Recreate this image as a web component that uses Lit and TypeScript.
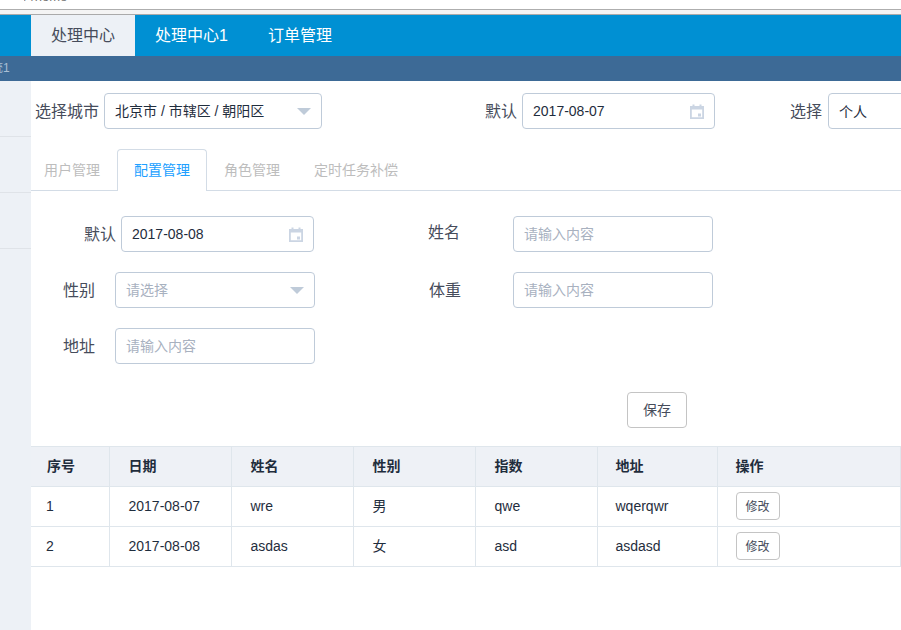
import { LitElement, html, css } from "lit";
import { customElement } from "lit/decorators.js";

const calendar = html`<svg class="cal" viewBox="0 0 14 15" width="14" height="15"><path fill="#cbd5e3" fill-rule="evenodd" d="M0 2h2.5V0.5h2V2h5V0.5h2V2H14v13H0zM1.8 5.5v7.7h10.4V5.5zM8 9.5h3v3H8z"/></svg>`;
const caret = html`<span class="caret"></span>`;

const rows = [
  ["1", "2017-08-07", "wre", "男", "qwe", "wqerqwr"],
  ["2", "2017-08-08", "asdas", "女", "asd", "asdasd"],
];

@customElement("app-root")
export class AppRoot extends LitElement {
  static styles = css`
    :host {
      display: block;
      width: 901px;
      height: 630px;
      overflow: hidden;
      background: #fff;
      color: #464c5b;
      font-family: "Liberation Sans", "Noto Sans CJK SC", sans-serif;
      font-size: 14px;
    }
    * { box-sizing: border-box; }
    .chrome { height: 15px; background: #fff; color: #777; font-size: 13px; line-height: 1; padding-left: 24px; overflow: hidden; }
    .chrome span { display: block; height: 4px; overflow: hidden; }
    .chrome span b { display: block; font-weight: 400; margin-top: -10px; }
    .chrome i { display: block; height: 1px; background: #aeaeae; margin: 5px 0 0 -24px; }
    .chrome u { display: block; height: 4px; background: #f4f4f4; margin-left: -24px; }
    .chrome em { display: block; height: 1px; background: #aaa; margin-left: -24px; }
    .nav { height: 41px; background: #0090d3; display: flex; padding-left: 31px; }
    .nav a { padding: 0 20px; color: #fff; font-size: 16px; line-height: 41px; white-space: nowrap; }
    .nav a.active { width: 104px; background: #edf1f6; color: #464c5b; }
    .sub { height: 25px; background: #3d6a96; color: #a9bfd4; font-size: 12px; line-height: 25px; overflow: hidden; }
    .sub span { display: inline-block; margin-left: -21px; }
    .body { display: flex; height: 549px; }
    .side { width: 31px; flex: none; background: #edf1f6; }
    .side div { height: 56px; border-bottom: 1px solid #dfe3e8; }
    .main { flex: 1; min-width: 0; overflow: hidden; }
    .top { display: flex; height: 68px; padding-top: 12px; }
    .lab { color: #464c5b; font-size: 16px; white-space: nowrap; padding-bottom: 3px; }
    .lab.up { padding-bottom: 6px; }
    .field {
      height: 36px;
      border: 1px solid #bfcbd9;
      border-radius: 4px;
      background: #fff;
      display: flex;
      align-items: center;
      justify-content: space-between;
      padding: 0 10px;
      color: #1f2d3d;
      font-size: 14px;
      white-space: nowrap;
      flex: none;
    }
    .zh { padding-bottom: 3px; }
    .ph { color: #a8b1bf; font-size: 14px; padding-bottom: 2px; }
    .caret { width: 0; height: 0; border: 7px solid transparent; border-top: 7px solid #bfcbd9; border-bottom: 0; }
    .cal { display: block; }
    .group { display: flex; align-items: center; height: 36px; }
    .tabs { display: flex; height: 42px; border-bottom: 1px solid #d3dce6; font-size: 14px; }
    .tab { padding: 0 17px 0 13px; width: 86px; line-height: 42px; color: #bdbdbd; white-space: nowrap; }
    .tab.on { width: 90px; padding: 0 16px; color: #20a0ff; background: #fff; border: 1px solid #d3dce6; border-bottom: 0; border-radius: 4px 4px 0 0; height: 42px; line-height: 41px; }
    .tab.mid { width: 90px; padding-left: 17px; }
    .tab.wide { width: auto; padding-left: 17px; }
    .form { height: 255px; }
    .form-body { display: grid; grid-template-columns: 397px 1fr; grid-template-rows: 36px 36px 36px; row-gap: 20px; padding-top: 25px; }
    .cell { display: flex; align-items: center; }
    .savebar { display: flex; padding: 28px 0 0 596px; }
    button { font: inherit; background: #fff; color: #464c5b; border: 1px solid #c4c4c4; border-radius: 4px; padding: 0 0 2px; }
    .save { width: 60px; height: 36px; font-size: 14px; }
    .mini { width: 44px; height: 28px; font-size: 12px; display: block; margin-left: -1px; padding: 0; }
    table { border-collapse: collapse; table-layout: fixed; width: 870px; font-size: 14px; }
    th, td { border: 1px solid #dfe6ec; border-left: 0; text-align: left; padding: 0 0 2px 19px; height: 40px; white-space: nowrap; color: #1f2d3d; }
    th { background: #eef1f6; font-weight: 700; font-size: 14px; padding-bottom: 3px; }
    td { font-size: 14px; }
    td.zc { padding-bottom: 4px; }
    th:first-child, td:first-child { padding-left: 15px; }
    th:first-child { padding-left: 16px; }
    th:nth-child(6), td:nth-child(6) { padding-left: 18px; }
    th:last-child { padding-left: 18px; }
    .c-l { width: 78px; }
    .c-m { width: 122px; }
    .c-n { width: 120px; }
  `;

  render() {
    return html`
      <div class="chrome"><span><b>/ /home</b></span><i></i><u></u><em></em></div>
      <div class="nav">
        <a class="active">处理中心</a><a>处理中心1</a><a>订单管理</a>
      </div>
      <div class="sub"><span>系统1</span></div>
      <div class="body">
        <div class="side"><div></div><div></div><div></div></div>
        <div class="main">
          <div class="top">
            <div class="group" style="margin-left:4px">
              <span class="lab">选择城市</span>
              <div class="field" style="width:218px;margin-left:5px"><span class="zh">北京市 / 市辖区 / 朝阳区</span>${caret}</div>
            </div>
            <div class="group" style="margin-left:163px">
              <span class="lab">默认</span>
              <div class="field" style="width:193px;margin-left:5px">2017-08-07${calendar}</div>
            </div>
            <div class="group" style="margin-left:75px">
              <span class="lab">选择</span>
              <div class="field" style="width:120px;margin-left:6px">个人</div>
            </div>
          </div>
          <div class="tabs">
            <div class="tab">用户管理</div>
            <div class="tab on">配置管理</div>
            <div class="tab mid">角色管理</div>
            <div class="tab wide">定时任务补偿</div>
          </div>
          <div class="form">
            <div class="form-body">
              <div class="cell">
                <span class="lab" style="margin-left:53px">默认</span>
                <div class="field" style="width:193px;margin-left:5px">2017-08-08${calendar}</div>
              </div>
              <div class="cell">
                <span class="lab up">姓名</span>
                <div class="field" style="width:200px;margin-left:53px"><span class="ph">请输入内容</span></div>
              </div>
              <div class="cell">
                <span class="lab" style="margin-left:32px">性别</span>
                <div class="field" style="width:200px;margin-left:20px"><span class="ph">请选择</span>${caret}</div>
              </div>
              <div class="cell">
                <span class="lab" style="margin-left:1px">体重</span>
                <div class="field" style="width:200px;margin-left:52px"><span class="ph">请输入内容</span></div>
              </div>
              <div class="cell">
                <span class="lab" style="margin-left:32px">地址</span>
                <div class="field" style="width:200px;margin-left:20px"><span class="ph">请输入内容</span></div>
              </div>
            </div>
            <div class="savebar"><button class="save">保存</button></div>
          </div>
          <table>
            <colgroup>
              <col class="c-l" /><col class="c-m" /><col class="c-m" /><col class="c-m" /><col class="c-m" /><col class="c-n" /><col />
            </colgroup>
            <thead>
              <tr><th>序号</th><th>日期</th><th>姓名</th><th>性别</th><th>指数</th><th>地址</th><th>操作</th></tr>
            </thead>
            <tbody>
              ${rows.map(
                (r) => html`<tr>${r.map((c) => html`<td class=${/[^\x00-\x7f]/.test(c) ? "zc" : ""}>${c}</td>`)}<td><button class="mini">修改</button></td></tr>`
              )}
            </tbody>
          </table>
        </div>
      </div>
    `;
  }
}
